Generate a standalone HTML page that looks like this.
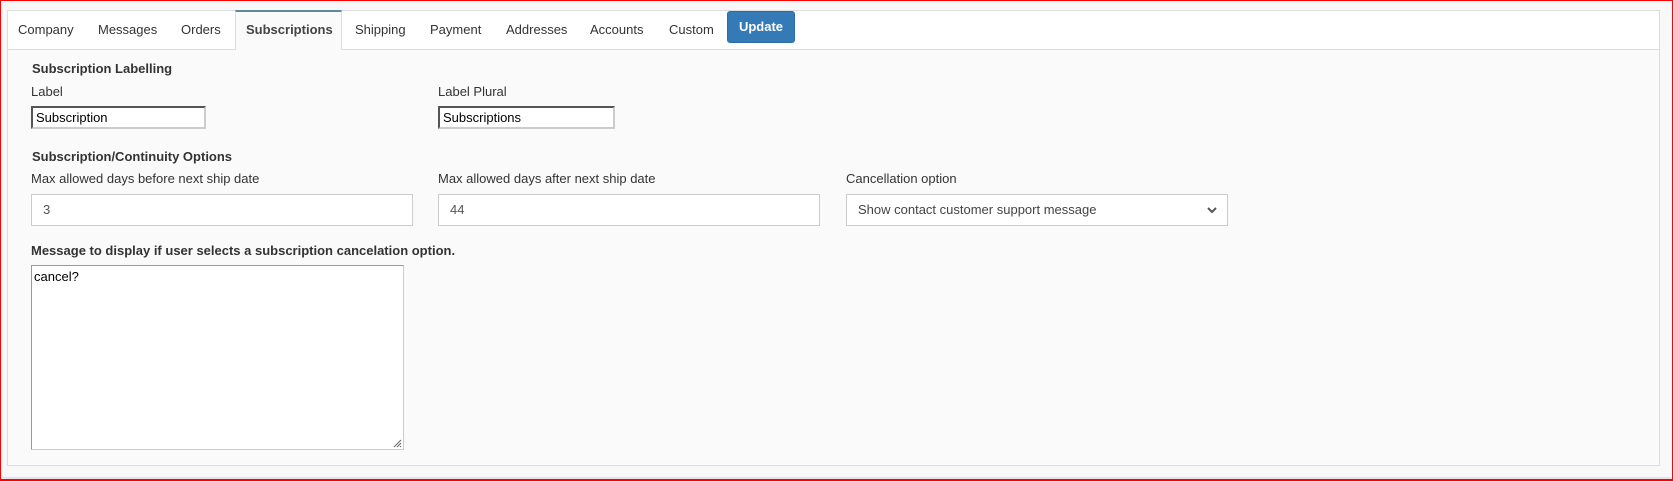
<!DOCTYPE html>
<html><head><style>
*{box-sizing:border-box;margin:0;padding:0}
body{width:1673px;height:481px;overflow:hidden;background:#f8f8f8;font-family:"Liberation Sans",Arial,sans-serif;font-size:13px;color:#333;position:relative}
.frame{position:absolute;left:0;top:0;width:1673px;height:481px;border:1px solid #f00;border-bottom:2px solid #f00}
.strip{position:absolute;left:1px;right:1px;bottom:2px;height:2px;background:#e4e4f0}
.panel{position:absolute;left:7px;top:10px;width:1653px;height:456px;border:1px solid #ddd;background:#fafafa}
.tabbar{position:absolute;left:0;top:0;right:0;height:39px;background:#fff;border-bottom:1px solid #ddd}
.t{position:absolute;top:11px;color:#333}
.active{position:absolute;left:227px;top:-1px;width:107px;height:40px;background:#fafafa;border:1px solid #ddd;border-top:2px solid #5b8a9c;border-bottom:none;font-weight:bold;padding:10px 0 0 10px;color:#444}
.btn{position:absolute;left:719px;top:0;width:68px;height:32px;background:#337ab7;border:1px solid #2e6da4;border-radius:3px;color:#fff;font-weight:bold;font-size:13px;text-align:center;line-height:29px}
.a{position:absolute}
b.a{color:#333}
.in{position:absolute;background:#fff;border:1px solid #ccc;padding-left:11px;color:#555}
.ins{position:absolute;background:#fff;border:2px solid;border-color:#555 #ccc #ccc #555;padding-left:3px;color:#000;line-height:19px}
</style></head><body>
<div class="panel">
 <div class="tabbar">
  <span class="t" style="left:10px">Company</span>
  <span class="t" style="left:90px">Messages</span>
  <span class="t" style="left:173px">Orders</span>
  <div class="active">Subscriptions</div>
  <span class="t" style="left:347px">Shipping</span>
  <span class="t" style="left:422px">Payment</span>
  <span class="t" style="left:498px">Addresses</span>
  <span class="t" style="left:582px">Accounts</span>
  <span class="t" style="left:661px">Custom</span>
  <div class="btn">Update</div>
 </div>
</div>
<b class="a" style="left:32px;top:61px">Subscription Labelling</b>
<span class="a" style="left:31px;top:84px">Label</span>
<div class="ins" style="left:31px;top:106px;width:175px;height:23px">Subscription</div>
<span class="a" style="left:438px;top:84px">Label Plural</span>
<div class="ins" style="left:438px;top:106px;width:177px;height:23px">Subscriptions</div>
<b class="a" style="left:32px;top:149px">Subscription/Continuity Options</b>
<span class="a" style="left:31px;top:171px">Max allowed days before next ship date</span>
<span class="a" style="left:438px;top:171px">Max allowed days after next ship date</span>
<span class="a" style="left:846px;top:171px">Cancellation option</span>
<div class="in" style="left:31px;top:194px;width:382px;height:32px;line-height:30px">3</div>
<div class="in" style="left:438px;top:194px;width:382px;height:32px;line-height:30px">44</div>
<div class="in" style="left:846px;top:194px;width:382px;height:32px;line-height:30px;color:#444">Show contact customer support message
 <svg style="position:absolute;right:10px;top:11px" width="10" height="8" viewBox="0 0 10 8"><path d="M1 2 L5 6 L9 2" stroke="#555" stroke-width="2" fill="none"/></svg></div>
<b class="a" style="left:31px;top:243px">Message to display if user selects a subscription cancelation option.</b>
<div class="a" style="left:31px;top:265px;width:373px;height:185px;background:#fff;border:1px solid;border-color:#999 #ccc #ccc #999;padding:3px 2px;color:#000">cancel?
 <svg style="position:absolute;right:1px;bottom:1px" width="9" height="9"><path d="M1 8L8 1M4 8L8 4M7 8L8 7" stroke="#666" stroke-width="1"/></svg></div>
<div class="strip"></div>
<div class="frame"></div>
</body></html>
